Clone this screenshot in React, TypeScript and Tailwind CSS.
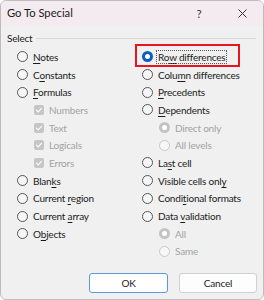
import React from 'react';

type Opt = {
  label: string;
  key?: number; // index of underlined access key
  kind: 'radio' | 'check';
  indent?: boolean;
  checked?: boolean;
  disabled?: boolean;
  focus?: boolean;
};

const leftOptions: Opt[] = [
  { label: 'Notes', key: 0, kind: 'radio' },
  { label: 'Constants', key: 1, kind: 'radio' },
  { label: 'Formulas', key: 0, kind: 'radio' },
  { label: 'Numbers', kind: 'check', indent: true, checked: true, disabled: true },
  { label: 'Text', kind: 'check', indent: true, checked: true, disabled: true },
  { label: 'Logicals', kind: 'check', indent: true, checked: true, disabled: true },
  { label: 'Errors', kind: 'check', indent: true, checked: true, disabled: true },
  { label: 'Blanks', key: 4, kind: 'radio' },
  { label: 'Current region', key: 8, kind: 'radio' },
  { label: 'Current array', key: 8, kind: 'radio' },
  { label: 'Objects', key: 1, kind: 'radio' },
];

const rightOptions: Opt[] = [
  { label: 'Row differences', key: 2, kind: 'radio', checked: true, focus: true },
  { label: 'Column differences', key: 4, kind: 'radio' },
  { label: 'Precedents', key: 0, kind: 'radio' },
  { label: 'Dependents', key: 0, kind: 'radio' },
  { label: 'Direct only', kind: 'radio', indent: true, checked: true, disabled: true },
  { label: 'All levels', kind: 'radio', indent: true, disabled: true },
  { label: 'Last cell', key: 2, kind: 'radio' },
  { label: 'Visible cells only', key: 17, kind: 'radio' },
  { label: 'Conditional formats', key: 5, kind: 'radio' },
  { label: 'Data validation', key: 5, kind: 'radio' },
  { label: 'All', kind: 'radio', indent: true, checked: true, disabled: true },
  { label: 'Same', kind: 'radio', indent: true, disabled: true },
];

const Label = ({ text, k }: { text: string; k?: number }) => {
  if (k === undefined || k >= text.length) return <>{text}</>;
  return (
    <>
      {text.slice(0, k)}
      <span className="underline underline-offset-2">{text[k]}</span>
      {text.slice(k + 1)}
    </>
  );
};

const RadioDot = ({ checked, disabled }: { checked?: boolean; disabled?: boolean }) => {
  if (disabled) {
    return checked ? (
      <span className="w-[11px] h-[11px] rounded-full bg-[#c4c4c4] flex items-center justify-center shrink-0">
        <span className="w-[5px] h-[5px] rounded-full bg-white" />
      </span>
    ) : (
      <span className="w-[11px] h-[11px] rounded-full border border-[#c9c9c9] bg-[#f7f7f7] shrink-0" />
    );
  }
  return checked ? (
    <span className="w-[11px] h-[11px] rounded-full bg-[#0f5cc0] flex items-center justify-center shrink-0">
      <span className="w-[5px] h-[5px] rounded-full bg-white" />
    </span>
  ) : (
    <span className="w-[11px] h-[11px] rounded-full border border-[#555] bg-[#f6f6f6] shrink-0" />
  );
};

const CheckBox = () => (
  <span className="w-[10px] h-[10px] rounded-[2px] bg-[#c6c6c6] flex items-center justify-center shrink-0">
    <svg width="8" height="8" viewBox="0 0 8 8" fill="none">
      <path d="M1.5 4.2 L3.2 5.8 L6.5 2.3" stroke="white" strokeWidth="1.1" strokeLinecap="round" strokeLinejoin="round" />
    </svg>
  </span>
);

const Row = ({ opt }: { opt: Opt }) => (
  <div className={`relative h-[17.7px] flex items-center ${opt.indent ? 'pl-[17px]' : ''}`}>
    {opt.kind === 'radio' ? <RadioDot checked={opt.checked} disabled={opt.disabled} /> : <CheckBox />}
    <span
      className={`ml-[5px] leading-none ${opt.disabled ? 'text-[#a3a3a3]' : 'text-[#1b1b1b]'} ${
        opt.focus ? 'outline outline-1 outline-dotted outline-[#555] outline-offset-[1px]' : ''
      }`}
    >
      <Label text={opt.label} k={opt.key} />
    </span>
    {opt.focus && (
      <span className="absolute left-[-7px] top-[-4.5px] w-[105px] h-[23px] border-[2.5px] border-[#e8141f]" />
    )}
  </div>
);

export default function App() {
  return (
    <div
      className="w-[264px] h-[300px] flex flex-col bg-[#f0f0f0] border border-[#bdbdbd] rounded-[6px] overflow-hidden text-[10px] tracking-[-0.2px]"
      style={{ fontFamily: 'Lato, "Noto Sans", sans-serif' }}
    >
      <div className="h-[25px] shrink-0 flex items-center bg-[#f4ebf1] pl-[6px]">
        <span className="text-[11.2px] text-[#1a1a1a] tracking-normal">Go To Special</span>
        <span className="ml-auto text-[11.5px] text-[#333] w-[12px] text-center">?</span>
        <span className="ml-[33px] mr-[16px] text-[#333]">
          <svg width="9" height="9" viewBox="0 0 9 9" fill="none">
            <path d="M0.5 0.5 L8.5 8.5 M8.5 0.5 L0.5 8.5" stroke="#333" strokeWidth="1" />
          </svg>
        </span>
      </div>

      <div className="flex items-center pl-[6px] pr-[7px] mt-[5px] h-[14px]">
        <span className="text-[#1b1b1b]">Select</span>
        <span className="flex-1 ml-[4px] h-px bg-[#d8d8d8]" />
      </div>

      <div className="grid grid-cols-[125px_1fr] pl-[16px] mt-[3px]">
        <div className="flex flex-col">
          {leftOptions.map((o) => (
            <Row key={o.label} opt={o} />
          ))}
        </div>
        <div className="flex flex-col">
          {rightOptions.map((o) => (
            <Row key={o.label} opt={o} />
          ))}
        </div>
      </div>

      <div className="mt-auto mb-[6px] flex justify-end gap-[11px] pr-[6px]">
        <button className="w-[79px] h-[20px] rounded-[3px] bg-white border-[1.5px] border-[#5a9ad8] text-[#1b1b1b]">
          OK
        </button>
        <button className="w-[78px] h-[20px] rounded-[3px] bg-[#fdfdfd] border border-[#d0d0d0] text-[#1b1b1b]">
          Cancel
        </button>
      </div>
    </div>
  );
}
